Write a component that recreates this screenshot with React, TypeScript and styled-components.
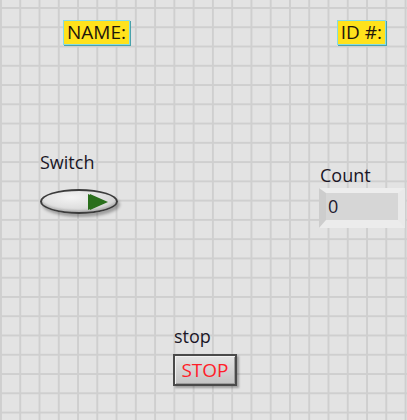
import styled, { createGlobalStyle } from 'styled-components';

const GlobalStyle = createGlobalStyle`
  html, body {
    margin: 0;
    padding: 0;
  }
  body {
    font-family: "Open Sans", "Liberation Sans", Arial, sans-serif;
  }
`;

function App() {
  return (
    <>
      <GlobalStyle />
      <Panel>
        <TopRow>
          <Tag>NAME:</Tag>
          <Tag>ID #:</Tag>
        </TopRow>

        <MiddleRow>
          <ControlGroup>
            <Caption>Switch</Caption>
            <Toggle>
              <Arrow />
            </Toggle>
          </ControlGroup>

          <ControlGroup $offset={13}>
            <Caption>Count</Caption>
            <Indicator>
              <IndicatorWell>0</IndicatorWell>
            </Indicator>
          </ControlGroup>
        </MiddleRow>

        <BottomRow>
          <ControlGroup>
            <Caption>stop</Caption>
            <StopButton>STOP</StopButton>
          </ControlGroup>
        </BottomRow>
      </Panel>
    </>
  );
}

export default App;

const Panel = styled.div`
  width: 407px;
  height: 420px;
  overflow: hidden;
  display: flex;
  flex-direction: column;
  background-color: #e3e3e3;
  background-image: linear-gradient(to right, #cfcfcf 2px, transparent 2px),
    linear-gradient(to bottom, #cfcfcf 2px, transparent 2px);
  background-size: 19.28px 19.28px;
  background-position: 0px 7px;
`;

const TopRow = styled.div`
  display: flex;
  justify-content: space-between;
  padding: 20px 21px 0 63px;
`;

const Tag = styled.div`
  height: 23px;
  line-height: 22px;
  padding: 0 3px;
  background: #ffe21c;
  color: #1f160c;
  font-size: 19px;
  border: 1px solid #86dbe3;
  box-shadow: 1px 1px 0 #4aa2ab;
`;

const MiddleRow = styled.div`
  display: flex;
  justify-content: space-between;
  align-items: flex-start;
  margin-top: 106px;
  padding: 0 2px 0 39px;
`;

const BottomRow = styled.div`
  display: flex;
  margin-top: 97px;
  padding-left: 173px;
`;

const ControlGroup = styled.div<{ $offset?: number }>`
  display: flex;
  flex-direction: column;
  align-items: flex-start;
  margin-top: ${(p) => p.$offset ?? 0}px;
`;

const Caption = styled.div`
  font-size: 18px;
  line-height: 22px;
  color: #1a1626;
  padding-left: 1px;
`;

const Toggle = styled.div`
  margin-top: 16px;
  margin-left: 1px;
  box-sizing: border-box;
  width: 78px;
  height: 25px;
  border: 2px solid #3c3c3c;
  border-radius: 50%;
  background: radial-gradient(ellipse at 40% 30%, #f4f4f4 0%, #dedede 55%, #c2c2c2 100%);
  box-shadow: 2px 3px 3px rgba(0, 0, 0, 0.3), inset 0 -2px 2px rgba(0, 0, 0, 0.15);
  display: flex;
  align-items: center;
  justify-content: flex-end;
  padding-right: 8px;
`;

const Arrow = styled.div`
  width: 0;
  height: 0;
  border-top: 8px solid transparent;
  border-bottom: 8px solid transparent;
  border-left: 18px solid #2a6f1c;
  filter: drop-shadow(-2px 0 0 #2a6f1c);
`;

const Indicator = styled.div`
  margin-top: 2px;
  width: 72px;
  height: 27px;
  border-style: solid;
  border-width: 5px 7px 8px 7px;
  border-color: #ededed #e9e9e9 #ececec #cdcdcd;
  background: #d6d6d6;
`;

const IndicatorWell = styled.div`
  font-size: 18px;
  line-height: 27px;
  padding-left: 2px;
  color: #1d1a30;
`;

const StopButton = styled.div`
  margin-top: 7px;
  width: 60px;
  height: 28px;
  border: 2px solid #4a4a4a;
  background: linear-gradient(to bottom, #e4e4e4, #c4c4c4);
  box-shadow: 2px 2px 2px rgba(0, 0, 0, 0.3), inset 1px 1px 0 #f2f2f2, inset -1px -1px 0 #9c9c9c;
  color: #ff1e2a;
  font-size: 19px;
  line-height: 28px;
  text-align: center;
`;
